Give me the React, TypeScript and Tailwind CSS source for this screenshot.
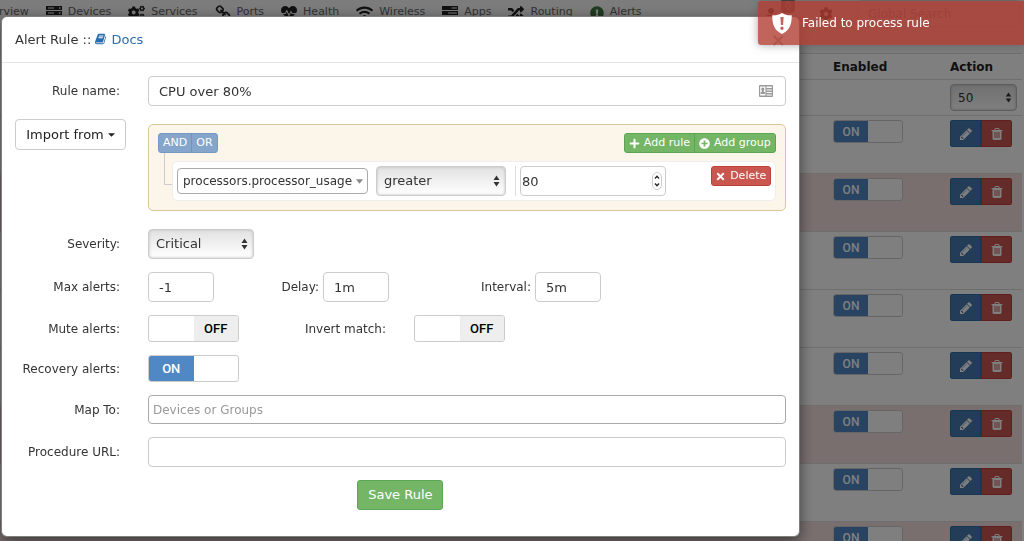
import { useState, type ReactNode } from "react";
import {
  FaCog,
  FaCogs,
  FaExclamationCircle,
  FaHeartbeat,
  FaPlus,
  FaPlusCircle,
  FaRandom,
  FaTimes,
  FaUser,
  FaWifi,
} from "react-icons/fa";

const Glyph = ({ d, className }: { d: string; className: string }) => (
  <svg viewBox="0 0 1792 1792" fill="currentColor" className={className} aria-hidden="true">
    <path d={d} />
  </svg>
);

const PENCIL =
  "M491 1536l91-91-235-235-91 91v107h128v128h107zm523-928q0-22-22-22-10 0-17 7l-542 542q-7 7-7 17 0 22 22 22 10 0 17-7l542-542q7-7 7-17zm-54-192l416 416-832 832h-416v-416l832-832zm683 96q0 53-37 90l-166 166-416-416 166-165q36-38 90-38 53 0 91 38l235 234q37 39 37 91z";
const TRASH =
  "M704 1376v-704q0-14-9-23t-23-9h-64q-14 0-23 9t-9 23v704q0 14 9 23t23 9h64q14 0 23-9t9-23zm256 0v-704q0-14-9-23t-23-9h-64q-14 0-23 9t-9 23v704q0 14 9 23t23 9h64q14 0 23-9t9-23zm256 0v-704q0-14-9-23t-23-9h-64q-14 0-23 9t-9 23v704q0 14 9 23t23 9h64q14 0 23-9t9-23zm-544-992h448l-48-117q-7-9-17-11h-317q-10 2-17 11zm928 32v64q0 14-9 23t-23 9h-96v948q0 83-47 143.5t-113 60.5h-832q-66 0-113-58.5t-47-141.5v-952h-96q-14 0-23-9t-9-23v-64q0-14 9-23t23-9h309l70-167q15-37 54-63t79-26h320q40 0 79 26t54 63l70 167h309q14 0 23 9t9 23z";
const BOOK =
  "M1639 478q40 57 18 129l-275 906q-19 64-76.5 107.5t-122.5 43.5h-923q-77 0-148.5-53.5t-99.5-131.5q-24-67-2-127 0-4 3-27t4-37q1-8-3-21.5t-3-19.5q2-11 8-21t16.5-23.5 16.5-23.5q23-38 45-91.5t30-91.5q3-10 .5-30t-.5-28q3-11 17-28t17-23q21-36 42-92t25-90q1-9-2.5-32t.5-28q4-13 22-30.5t22-22.5q19-26 42.5-84.5t27.5-96.5q1-8-3-25.5t-2-26.5q2-8 9-18t18-23 17-21q8-12 16.5-30.5t15-35 16-36 19.5-32 26.5-23.5 36-11.5 47.5 5.5l-1 3q38-9 51-9h761q74 0 114 56t18 130l-274 906q-36 119-71.5 153.5t-128.5 34.5h-869q-27 0-38 15-11 16-1 43 24 70 144 70h923q29 0 56-15.5t35-41.5l300-987q7-22 5-57 38 15 59 43zm-1064 2q-4 13 2 22.5t20 9.5h608q13 0 25.5-9.5t16.5-22.5l21-64q4-13-2-22.5t-20-9.5h-608q-13 0-25.5 9.5t-16.5 22.5zm-83 256q-4 13 2 22.5t20 9.5h608q13 0 25.5-9.5t16.5-22.5l21-64q4-13-2-22.5t-20-9.5h-608q-13 0-25.5 9.5t-16.5 22.5z";
const LINK =
  "M1520 1216q0-40-28-68l-208-208q-28-28-68-28-42 0-72 32 3 3 19 18.5t21.5 21.5 15 19 13 25.5 3.5 27.5q0 40-28 68t-68 28q-15 0-27.5-3.5t-25.5-13-19-15-21.5-21.5-18.5-19q-33 31-33 73 0 40 28 68l206 207q27 27 68 27 40 0 68-26l147-146q28-28 28-67zm-703-705q0-40-28-68l-206-207q-28-28-68-28-39 0-68 27l-147 146q-28 28-28 67 0 40 28 68l208 208q27 27 68 27 42 0 72-31-3-3-19-18.5t-21.5-21.5-15-19-13-25.5-3.5-27.5q0-40 28-68t68-28q15 0 27.5 3.5t25.5 13 19 15 21.5 21.5 18.5 19q33-31 33-73zm895 705q0 120-85 203l-147 146q-83 83-203 83-121 0-204-85l-206-207q-83-83-83-203 0-123 88-209l-88-88q-86 88-208 88-120 0-204-84l-208-208q-84-84-84-204t85-203l147-146q83-83 203-83 121 0 204 85l206 207q83 83 83 203 0 123-88 209l88 88q86-88 208-88 120 0 204 84l208 208q84 84 84 204z";

const ServerIcon = () => (
  <svg viewBox="0 0 16 14" className="h-[14px] w-4" aria-hidden="true">
    <path
      fill="currentColor"
      fillRule="evenodd"
      d="M0 0h16v4H0zM2 1.5v1h6v-1zM13 1.3v1.4h1.4V1.3zM0 5h16v4H0zM2 6.5v1h6v-1zM13 6.3v1.4h1.4V6.3zM0 10h16v4H0zM2 11.5v1h6v-1zM13 11.3v1.4h1.4v-1.4z"
    />
  </svg>
);

const TasksIcon = () => (
  <svg viewBox="0 0 16 14" className="h-[14px] w-4" aria-hidden="true">
    <path
      fill="currentColor"
      fillRule="evenodd"
      d="M0 0h16v4H0zM9.500 1.500v1H15v-1zM0 5h16v4H0zM6 6.500v1h9v-1zM0 10h16v4H0zM11.500 11.500v1H15v-1z"
    />
  </svg>
);

const ContactIcon = ({ className }: { className: string }) => (
  <svg viewBox="0 0 14 12" className={className} aria-hidden="true">
    <path
      fill="currentColor"
      fillRule="evenodd"
      d="M1 0h12a1 1 0 0 1 1 1v10a1 1 0 0 1-1 1H1a1 1 0 0 1-1-1V1a1 1 0 0 1 1-1zM1.200 1.500v9h5.200v-9zM7.500 1.500v1.600h5.300V1.500zM7.500 4.600v1h5.300v-1zM7.500 7v1h5.300V7zM7.500 9.400v1.100h5.300V9.400z"
    />
    <path fill="currentColor" d="M3.800 2.500a1.500 1.700 0 0 1 1 3L4.700 6.600L6 7.400V9H1.600V7.400L2.900 6.600L2.800 5.500a1.500 1.700 0 0 1 1-3z" />
  </svg>
);

const UpDown = ({ className }: { className: string }) => (
  <svg viewBox="0 0 7 12" className={className} aria-hidden="true">
    <path d="M3.500 0.500L6.500 5H0.500zM3.500 11.500L0.500 7H6.500z" fill="#333" />
  </svg>
);

const navItems: { label: string; icon?: ReactNode }[] = [
  { label: "Overview" },
  { label: "Devices", icon: <ServerIcon /> },
  { label: "Services", icon: <FaCogs className="size-[17px]" /> },
  { label: "Ports", icon: <Glyph d={LINK} className="size-4" /> },
  { label: "Health", icon: <FaHeartbeat className="size-4" /> },
  { label: "Wireless", icon: <FaWifi className="size-[17px]" /> },
  { label: "Apps", icon: <TasksIcon /> },
  { label: "Routing", icon: <FaRandom className="size-4" /> },
  { label: "Alerts", icon: <FaExclamationCircle className="size-[14px] text-[#3c763d]" /> },
];

// true = the alert is firing, its row is tinted
const rules = [false, true, false, false, false, true, false, true];

const inputClass =
  "h-[30px] rounded border border-[#ccc] bg-white px-2.5 text-[13px] text-[#333] outline-none";

function Switch({ id, label, on, small }: { id?: string; label?: string; on?: boolean; small?: boolean }) {
  const [checked, setChecked] = useState(!!on);
  return (
    <span
      className={`relative flex shrink-0 overflow-hidden rounded-[3px] border border-[#ccc] bg-white font-[Roboto,sans-serif] font-medium ${
        small ? "h-[23px] w-[70px] text-xs" : "h-[27px] w-[91px] text-[13px]"
      }`}
    >
      <input
        id={id}
        aria-label={label}
        type="checkbox"
        checked={checked}
        onChange={(e) => setChecked(e.target.checked)}
        className="absolute inset-0 size-full cursor-pointer opacity-0"
      />
      {checked ? (
        <span className="flex w-1/2 items-center justify-center bg-[#5088c5] text-white">ON</span>
      ) : (
        <span className="ml-auto flex w-1/2 items-center justify-center bg-[#eee] text-black">OFF</span>
      )}
    </span>
  );
}

const Row = ({ label, htmlFor, children }: { label: string; htmlFor: string; children: ReactNode }) => (
  <div className="flex items-center gap-7">
    <label htmlFor={htmlFor} className="w-[105px] shrink-0 text-right text-xs whitespace-nowrap">
      {label}
    </label>
    <div className="flex min-w-0 flex-1 items-center">{children}</div>
  </div>
);

function QueryBuilder() {
  return (
    <div className="my-[5px] min-w-0 flex-1 rounded-[5px] border border-[#dcc896] bg-[#fcf5e9] px-[9px] pt-2 pb-[9px]">
      <div className="flex justify-between text-[11px] text-white">
        <div className="flex h-5 rounded-[3px] border border-[#7599c4] bg-[#85a5ca]">
          <button type="button" className="w-[33px] border-r border-[#6f94c0]">AND</button>
          <button type="button" className="w-[25px]">OR</button>
        </div>
        <div className="flex h-5 rounded-[3px] border border-[#5ba653] bg-[#74b566]">
          <button type="button" className="flex items-center gap-1 border-r border-[#5ba653] px-1 whitespace-nowrap">
            <FaPlus className="size-[11px]" />
            Add rule
          </button>
          <button type="button" className="flex items-center gap-1 px-1 whitespace-nowrap">
            <FaPlusCircle className="size-[11px]" />
            Add group
          </button>
        </div>
      </div>

      <div className="flex items-start pl-[6px]">
        <div className="h-8 w-2 shrink-0 border-b border-l border-[#ccc]" />
        <div className="mt-2 flex min-w-0 flex-1 items-start rounded-[5px] border border-[#eee] bg-white p-1">
          <div className="relative mt-0.5 shrink-0">
            <select
              aria-label="Field"
              className="h-[26px] w-[191px] appearance-none rounded border border-[#aaa] bg-white pl-[5px] text-xs text-[#333] outline-none"
            >
              <option>processors.processor_usage</option>
            </select>
            <svg viewBox="0 0 8 5" className="absolute top-[11px] right-[5px] h-[5px] w-[7px]" aria-hidden="true">
              <path d="M0 0h8L4 5z" fill="#888" />
            </svg>
          </div>
          <div className="relative ml-2 shrink-0">
            <select
              aria-label="Operator"
              className="h-[30px] w-[130px] appearance-none rounded border border-[#ccc] bg-linear-to-b from-[#e2e2e2] to-white px-[7px] text-[13px] text-[#333] shadow-[inset_0_0_3px_#bbb] outline-none"
            >
              <option>greater</option>
            </select>
            <UpDown className="absolute top-[9px] right-[6px] h-3 w-[7px]" />
          </div>
          <div className="relative ml-[9px] border-l border-[#ddd] pl-1">
            <input
              aria-label="Value"
              type="number"
              defaultValue={80}
              className="h-[30px] w-[146px] [appearance:textfield] rounded border border-[#ccc] bg-white px-px text-[13px] text-[#333] outline-none [&::-webkit-inner-spin-button]:appearance-none"
            />
            <svg viewBox="0 0 10 18" className="absolute top-1.5 right-1 h-[18px] w-[10px]" aria-hidden="true">
              <rect x="0.5" y="0.5" width="9" height="17" rx="4.500" fill="#fff" stroke="#ccc" />
              <path d="M3 6.500L5 4.300L7 6.500M3 11.500L5 13.700L7 11.500" fill="none" stroke="#222" strokeWidth="1.300" />
            </svg>
          </div>
          <button
            type="button"
            className="ml-auto flex h-5 w-[60px] items-center justify-center gap-1 rounded-[3px] border border-[#c13f3a] bg-[#ca5650] text-[11px] text-white"
          >
            <FaTimes className="size-[11px]" />
            Delete
          </button>
        </div>
      </div>
    </div>
  );
}

function RuleForm() {
  return (
    <form className="flex flex-col gap-[13px] px-[13px] pt-[13px] pb-[26px]" onSubmit={(e) => e.preventDefault()}>
      <Row label="Rule name:" htmlFor="name">
        <div className="relative w-full">
          <input id="name" defaultValue="CPU over 80%" className={`${inputClass} w-full`} />
          <ContactIcon className="absolute top-[9px] right-[13px] h-3 w-[14px] text-[#999]" />
        </div>
      </Row>

      <div className="flex items-start gap-[22px]">
        <button
          type="button"
          className="flex h-[31px] w-[111px] shrink-0 items-center justify-center gap-1 rounded border border-[#ccc] bg-white text-[13px] whitespace-nowrap text-[#222]"
        >
          Import from
          <svg viewBox="0 0 8 4" className="h-1 w-[7px]" aria-hidden="true">
            <path d="M0 0h8L4 4z" fill="#222" />
          </svg>
        </button>
        <QueryBuilder />
      </div>

      <Row label="Severity:" htmlFor="severity">
        <div className="relative">
          <select
            id="severity"
            className="h-[30px] w-[106px] appearance-none rounded border border-[#ccc] bg-linear-to-b from-[#e2e2e2] to-white px-[7px] text-[13px] text-[#333] shadow-[inset_0_0_3px_#bbb] outline-none"
          >
            <option>Critical</option>
          </select>
          <UpDown className="absolute top-[9px] right-[6px] h-3 w-[7px]" />
        </div>
      </Row>

      <Row label="Max alerts:" htmlFor="count">
        <input id="count" defaultValue="-1" className={`${inputClass} w-[66px]`} />
        <label htmlFor="delay" className="mr-1 w-[105px] text-right text-xs">Delay:</label>
        <input id="delay" defaultValue="1m" className={`${inputClass} w-[66px]`} />
        <label htmlFor="interval" className="mr-1 w-[142px] text-right text-xs">Interval:</label>
        <input id="interval" defaultValue="5m" className={`${inputClass} w-[66px]`} />
      </Row>

      <Row label="Mute alerts:" htmlFor="mute">
        <Switch id="mute" />
        <label htmlFor="invert" className="mr-7 w-[147px] text-right text-xs">Invert match:</label>
        <Switch id="invert" />
      </Row>

      <Row label="Recovery alerts:" htmlFor="recovery">
        <Switch id="recovery" on />
      </Row>

      <Row label="Map To:" htmlFor="maps">
        <input
          id="maps"
          placeholder="Devices or Groups"
          className="h-[29px] w-full rounded border border-[#aaa] bg-white px-1 text-xs outline-none placeholder:text-[#999]"
        />
      </Row>

      <Row label="Procedure URL:" htmlFor="proc">
        <input id="proc" className={`${inputClass} w-full`} />
      </Row>

      <button
        type="submit"
        className="h-[30px] w-[86px] self-center rounded-[3px] border border-[#5ba653] bg-[#74b566] text-[13px] whitespace-nowrap text-white"
      >
        Save Rule
      </button>
    </form>
  );
}

export default function App() {
  return (
    <div className="relative h-screen overflow-hidden bg-white font-['DejaVu_Sans',Verdana,sans-serif] text-[#333]">
      {/* Top navigation */}
      <header className="flex h-[53px] items-start bg-[#f8f8f8] pr-1">
        <nav className="-ml-[29px] flex h-[25px] items-center gap-[17px] text-[11px] text-[#666]">
          {navItems.map((item) => (
            <a key={item.label} href="#" className="flex items-center gap-1.5">
              <span className="text-[#222]">{item.icon}</span>
              {item.label}
            </a>
          ))}
        </nav>
        <div className="ml-auto flex h-[27px] items-center text-[#222]">
          <FaUser className="size-3" />
          <span className="mr-6 mb-4 ml-1 rounded bg-[#777] px-1 text-[10px] text-[#ddd]">0</span>
          <FaCog className="mr-6 size-[14px]" />
          <input
            aria-label="Global Search"
            placeholder="Global Search"
            className="h-[27px] w-[163px] rounded border border-[#ddd] bg-white px-2.5 text-xs placeholder:text-[#999]"
          />
        </div>
      </header>

      {/* Rules list */}
      <div className="pr-0.5">
        <table className="w-full table-fixed border-collapse text-left text-xs">
          <colgroup>
            <col />
            <col className="w-[117px]" />
            <col className="w-[77px]" />
          </colgroup>
          <thead>
            <tr className="h-[26px] border-y border-[#ddd]">
              <th />
              <th className="px-[5px] text-[#222]">Enabled</th>
              <th className="px-[5px] text-[#222]">Action</th>
            </tr>
          </thead>
          <tbody>
            <tr className="h-9 border-b border-[#ddd]">
              <td />
              <td />
              <td className="px-[5px]">
                <div className="relative">
                  <select
                    aria-label="Results per page"
                    className="h-[27px] w-[67px] appearance-none rounded border border-[#bbb] bg-linear-to-b from-[#e2e2e2] to-white px-[7px] text-xs shadow-[inset_0_0_3px_#bbb] outline-none"
                  >
                    <option>50</option>
                  </select>
                  <UpDown className="absolute top-2 right-[5px] h-[11px] w-[7px]" />
                </div>
              </td>
            </tr>
            {rules.map((firing, i) => (
              <tr key={i} className={`h-[58px] border-b border-[#ddd] align-top ${firing ? "bg-[#f2dede]" : ""}`}>
                <td />
                <td className="px-[5px] pt-1">
                  <Switch label={`Enable rule ${i + 1}`} on small />
                </td>
                <td className="px-[5px] pt-1">
                  <div className="flex h-[27px] w-[62px] overflow-hidden rounded-[3px] text-white">
                    <button
                      type="button"
                      aria-label="Edit rule"
                      className="flex w-[31px] items-center justify-center border border-[#2e6da4] bg-[#4678b0]"
                    >
                      <Glyph d={PENCIL} className="size-[14px]" />
                    </button>
                    <button
                      type="button"
                      aria-label="Delete rule"
                      className="flex w-[31px] items-center justify-center border border-[#c13f3a] bg-[#ca5650]"
                    >
                      <Glyph d={TRASH} className="size-[14px]" />
                    </button>
                  </div>
                </td>
              </tr>
            ))}
          </tbody>
        </table>
      </div>

      {/* Alert rule dialog */}
      <div className="fixed inset-0 overflow-hidden bg-black/50 pt-4">
        <div
          role="dialog"
          aria-label="Alert Rule"
          className="ml-px w-[78%] rounded-md border border-black/50 bg-white shadow-[0_4px_14px_rgba(0,0,0,0.5)]"
        >
          <div className="flex h-[46px] items-center border-b border-[#e5e5e5] px-[13px] text-[13px]">
            <h5>
              Alert Rule ::{" "}
              <a href="#" className="text-[#2a6cb0]">
                <Glyph d={BOOK} className="mr-1 inline size-3 align-[-1px]" />
                Docs
              </a>
            </h5>
            <button type="button" aria-label="Close" className="ml-auto text-lg font-bold text-[#aaa]">
              ×
            </button>
          </div>
          <RuleForm />
        </div>
      </div>

      {/* Error toast */}
      <div
        role="alert"
        className="fixed top-px right-0 flex h-11 w-[266px] items-center gap-2.5 rounded-l-[3px] bg-[#b13d33]/80 pl-[14px] text-xs text-white shadow-[0_0_8px_rgba(80,80,80,0.5)]"
      >
        <svg viewBox="0 0 20 21" className="h-[21px] w-5" aria-hidden="true">
          <path
            fill="#fff"
            fillRule="evenodd"
            d="M10 0C7 2 3.500 2.400 0.300 2.200C0 9 1.500 17 10 21C18.500 17 20 9 19.700 2.200C16.500 2.400 13 2 10 0zM8.400 4h3.200l-0.500 8H8.900zM10 13.500a1.700 1.700 0 1 1 0 3.400a1.700 1.700 0 0 1 0-3.400z"
          />
        </svg>
        Failed to process rule
      </div>
    </div>
  );
}
